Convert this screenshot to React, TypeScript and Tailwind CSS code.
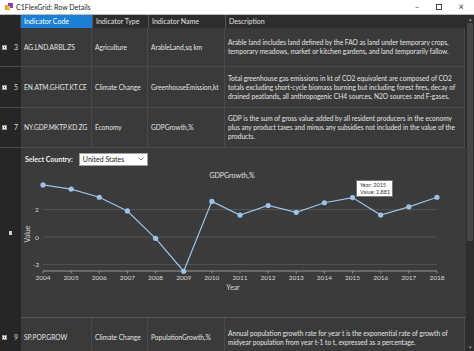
const rows = [
  {
    n: 3,
    code: "AG.LND.ARBL.ZS",
    type: "Agriculture",
    name: "ArableLand,sq km",
    desc: "Arable land includes land defined by the FAO as land under temporary crops, temporary meadows, market or kitchen gardens, and land temporarily fallow.",
    h: "h-[39px]",
  },
  {
    n: 5,
    code: "EN.ATM.GHGT.KT.CE",
    type: "Climate Change",
    name: "GreenhouseEmission,kt",
    desc: "Total greenhouse gas emissions in kt of CO2 equivalent are composed of CO2 totals excluding short-cycle biomass burning but including forest fires, decay of drained peatlands, all anthropogenic CH4 sources, N2O sources and F-gases.",
    h: "h-[41px]",
  },
  {
    n: 7,
    code: "NY.GDP.MKTP.KD.ZG",
    type: "Economy",
    name: "GDPGrowth,%",
    desc: "GDP is the sum of gross value added by all resident producers in the economy plus any product taxes and minus any subsidies not included in the value of the products.",
    h: "h-[40px]",
  },
];

const growth = [3.8, 3.5, 2.9, 1.9, -0.1, -2.5, 2.6, 1.6, 2.3, 1.8, 2.5, 2.88, 1.6, 2.2, 2.9];

const px = (i: number) => 22 + i * 28.14;
const py = (v: number) => 69 - 13.7 * v;

const font = "Lato, 'Open Sans', sans-serif";

function ExpandIcon() {
  return (
    <span className="inline-block w-[5px] h-[5px] bg-[#e8e8e8] border border-[#9a9a9a] relative">
      <span className="absolute left-[1px] top-[1px] w-[1px] h-[1px] bg-[#555]" />
    </span>
  );
}

function RowHeader({ n }: { n: number }) {
  return (
    <div className="w-[21px] shrink-0 bg-[#262626] border-b border-[#4a4a4a] flex items-center justify-between pl-[2px] pr-[3px]">
      <ExpandIcon />
      <span className="text-[7px] text-[#dcdcdc]">{n}</span>
    </div>
  );
}

function Cell({ w, children }: { w: string; children: React.ReactNode }) {
  return (
    <div className={`${w} shrink-0 border-r border-b border-[#4a4a4a] bg-[#3a3a3a] flex items-center px-[3px] text-[6.6px] leading-[9px] text-[#e4e4e4]`}>
      {children}
    </div>
  );
}

function Chart() {
  const pts = growth.map((v, i) => `${px(i)},${py(v)}`).join(" ");
  return (
    <div className="flex-1 bg-[#3b3b3b] border-b border-[#555] relative">
      <div className="flex items-center h-[20px] pl-[4px] gap-[6px] pt-[2px]">
        <span className="text-[7px] font-bold text-[#f0f0f0]">Select Country:</span>
        <div className="w-[69px] h-[13px] bg-white border border-[#a0a0a0] flex items-center justify-between px-[3px] text-[7px] text-[#222]">
          <span>United States</span>
          <svg width="6" height="4" viewBox="0 0 6 4">
            <path d="M0.5 0.5 L3 3 L5.5 0.5" fill="none" stroke="#555" strokeWidth="0.8" />
          </svg>
        </div>
      </div>
      <svg width="445" height="149" className="block" style={{ fontFamily: font }}>
        <text x="211" y="10" fontSize="7" fill="#e0e0e0" textAnchor="middle">GDPGrowth,%</text>
        {[2, 0, -2].map((v) => (
          <g key={v}>
            <line x1={px(0)} x2={px(14)} y1={py(v)} y2={py(v)} stroke="#5c5c5c" strokeWidth="0.8" />
            <text x={v < 0 ? 12 : 14} y={py(v) + 2.5} fontSize="6.5" fill="#d8d8d8">{v}</text>
          </g>
        ))}
        <line x1={px(0)} x2={px(14)} y1={103} y2={103} stroke="#9a9a9a" strokeWidth="1" />
        {growth.map((_, i) => (
          <g key={i}>
            <line x1={px(i)} x2={px(i)} y1={103} y2={105.5} stroke="#9a9a9a" strokeWidth="0.8" />
            <text x={px(i)} y={111.5} fontSize="6.5" fill="#d8d8d8" textAnchor="middle">{2004 + i}</text>
          </g>
        ))}
        <text x="212" y="122" fontSize="7" fill="#d8d8d8" textAnchor="middle">Year</text>
        <text x="9" y="66" fontSize="7" fill="#d8d8d8" textAnchor="middle" transform="rotate(-90 9 66)">Value</text>
        <polyline points={pts} fill="none" stroke="#9cc3e6" strokeWidth="1.2" />
        {growth.map((v, i) => (
          <circle key={i} cx={px(i)} cy={py(v)} r="2.6" fill="#9cc3e6" />
        ))}
      </svg>
      <div className="absolute left-[335px] top-[32px] w-[37px] h-[17px] bg-white border border-[#777] px-[3px] flex flex-col justify-center text-[5.5px] leading-[7px] text-[#333] whitespace-nowrap">
        <span>Year: 2015</span>
        <span>Value: 2.881</span>
      </div>
    </div>
  );
}

export default function App() {
  return (
    <div className="w-[474px] h-[351px] overflow-hidden bg-[#2b2b2b] flex flex-col" style={{ fontFamily: font }}>
      {/* title bar */}
      <div className="h-[15px] shrink-0 bg-white flex items-center pl-[5px] border-b border-[#bcbcbc]">
        <svg width="8" height="8" viewBox="0 0 8 8" className="shrink-0">
          <rect x="0" y="2" width="5" height="5" fill="#e6a21f" />
          <rect x="3" y="0" width="5" height="5" fill="#9a3ab8" />
          <rect x="2" y="3" width="3" height="3" fill="#f5d04a" />
        </svg>
        <span className="ml-[3px] text-[7px] text-[#222]">C1FlexGrid: Row Details</span>
        <div className="ml-auto flex items-center h-full text-[#333] pr-[2px]">
          <span className="w-[22px] text-center text-[8px]">–</span>
          <span className="w-[22px] flex justify-center">
            <span className="w-[6px] h-[6px] border border-[#444]" />
          </span>
          <span className="w-[22px] text-center text-[9px]">×</span>
        </div>
      </div>

      <div className="flex-1 flex min-h-0">
        <div className="flex-1 flex flex-col min-w-0 border-r border-[#2b2b2b]">
          {/* header */}
          <div className="h-[13px] shrink-0 flex bg-[#2d2d2d] text-[7px] text-[#e0e0e0]">
            <div className="w-[21px] shrink-0 bg-[#262626] border-r border-[#444]" />
            <div className="w-[71px] shrink-0 bg-[#1b7fd5] text-white flex items-center px-[3px]">Indicator Code</div>
            <div className="w-[56px] shrink-0 border-l border-[#555] flex items-center px-[3px]">Indicator Type</div>
            <div className="w-[77px] shrink-0 border-l border-[#555] flex items-center px-[3px]">Indicator Name</div>
            <div className="flex-1 border-l border-[#555] flex items-center px-[3px]">Description</div>
          </div>

          {rows.map((r) => (
            <div key={r.n} className={`${r.h} shrink-0 flex`}>
              <RowHeader n={r.n} />
              <Cell w="w-[71px]">{r.code}</Cell>
              <Cell w="w-[56px]">{r.type}</Cell>
              <Cell w="w-[77px]">{r.name}</Cell>
              <Cell w="flex-1 min-w-0">{r.desc}</Cell>
            </div>
          ))}

          {/* detail chart */}
          <div className="h-[170px] shrink-0 flex">
            <div className="w-[21px] shrink-0 bg-[#262626] flex items-center justify-center">
              <span className="w-[3px] h-[4px] bg-[#cfcfcf]" />
            </div>
            <Chart />
          </div>

          <div className="h-[40px] shrink-0 flex">
            <RowHeader n={9} />
            <Cell w="w-[71px]">SP.POP.GROW</Cell>
            <Cell w="w-[56px]">Climate Change</Cell>
            <Cell w="w-[77px]">PopulationGrowth,%</Cell>
            <Cell w="flex-1 min-w-0">
              Annual population growth rate for year t is the exponential rate of growth of midyear population from year t-1 to t, expressed as a percentage.
            </Cell>
          </div>
        </div>

        {/* scrollbar */}
        <div className="w-[8px] shrink-0 bg-[#2e2e2e] flex flex-col items-center">
          <span className="text-[5px] leading-[8px] text-[#999]">▴</span>
          <div className="w-[6px] h-[218px] bg-[#474747]" />
          <div className="flex-1" />
          <span className="text-[5px] leading-[8px] text-[#999]">▾</span>
        </div>
      </div>
    </div>
  );
}
